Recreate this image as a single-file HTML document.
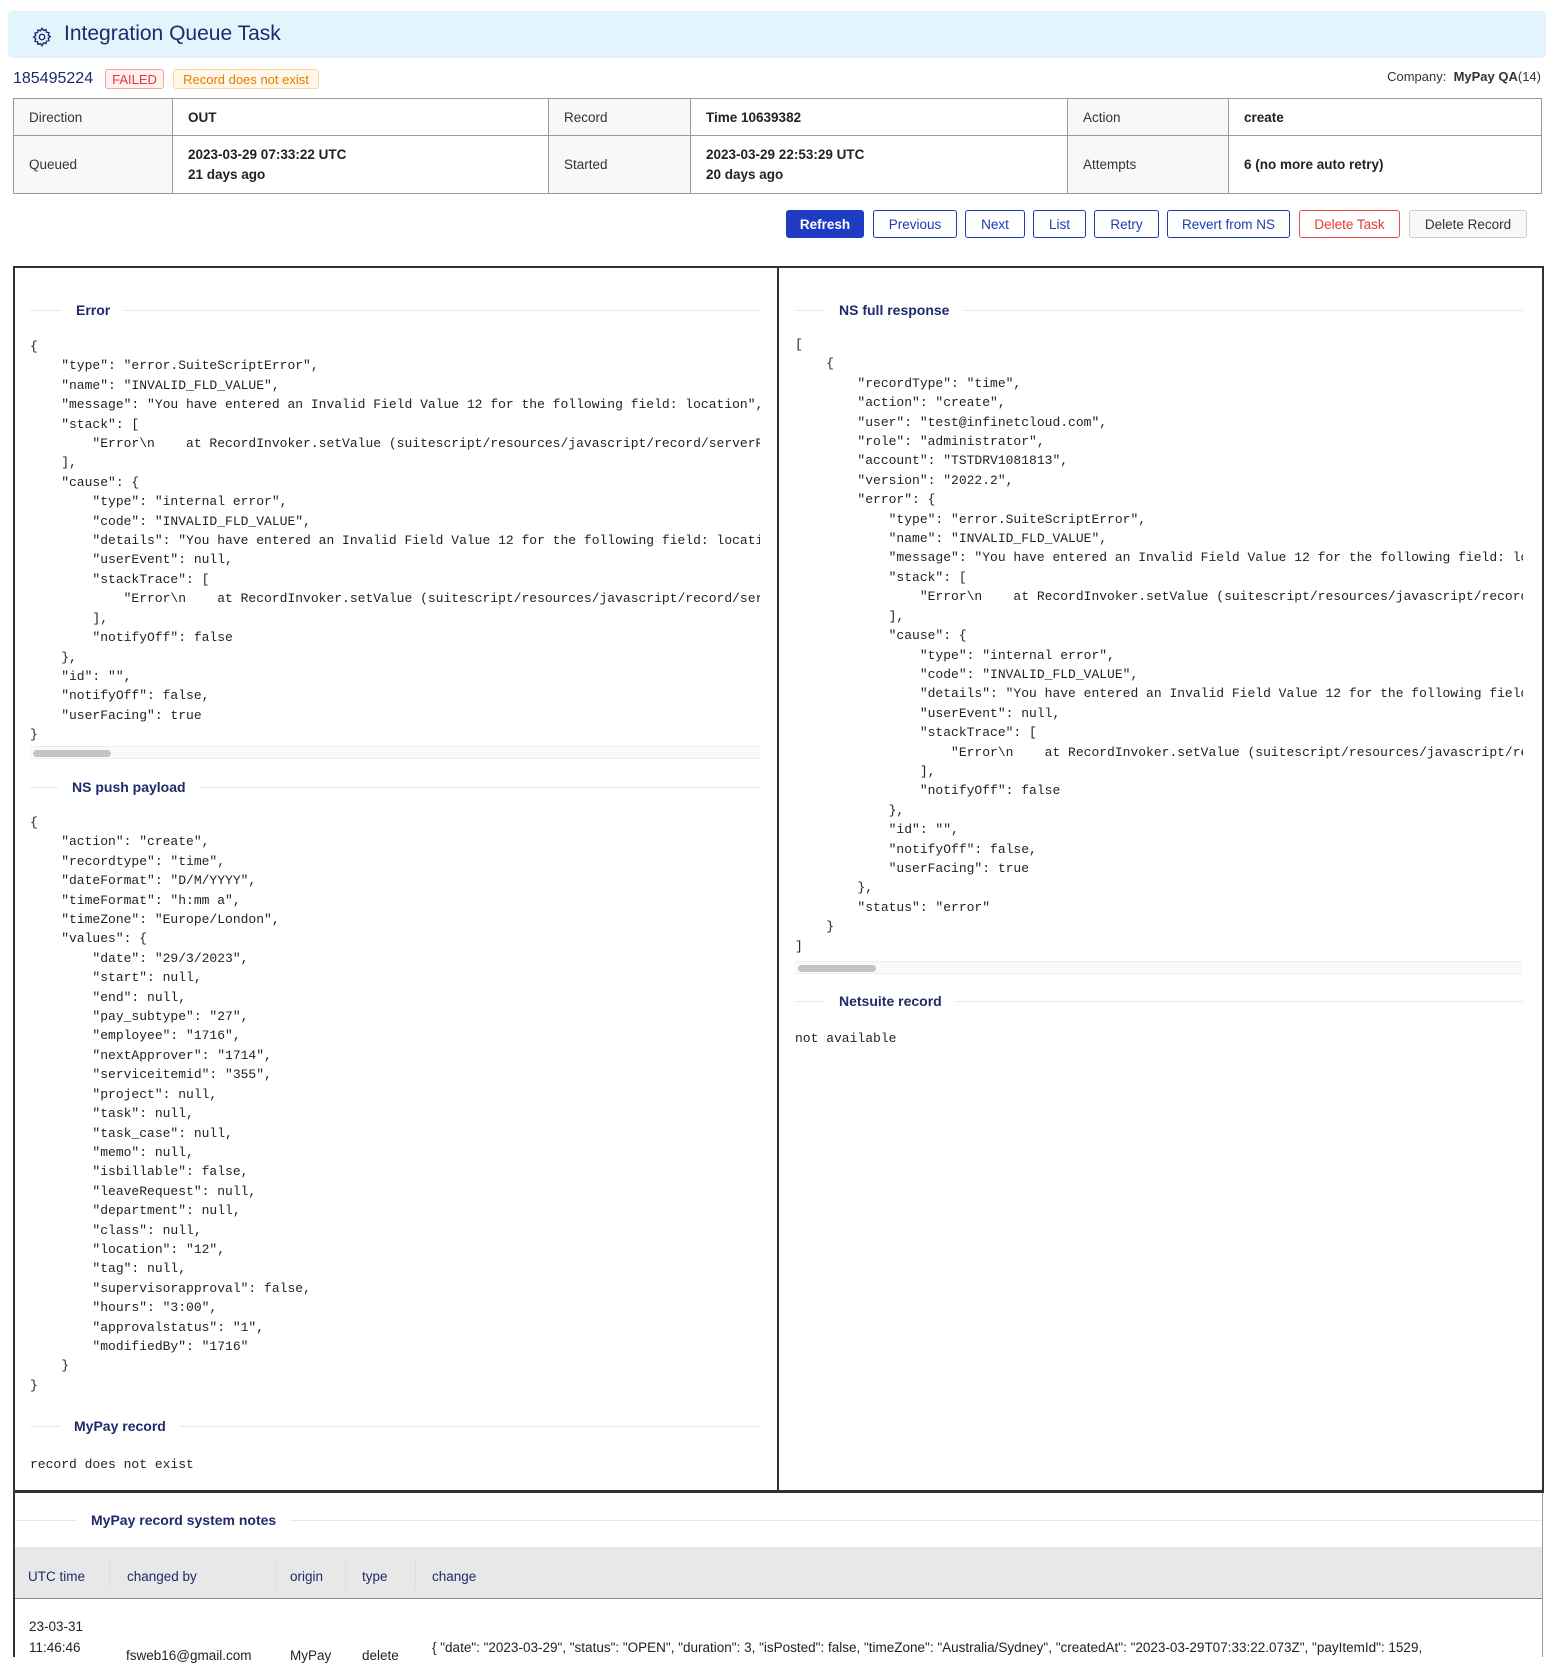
<!DOCTYPE html>
<html><head><meta charset="utf-8"><style>
*{box-sizing:border-box;margin:0;padding:0}
body{width:1550px;height:1657px;overflow:hidden;background:#fff;font-family:"Liberation Sans",sans-serif;color:#222;position:relative}
.abs{position:absolute}
.hdr{left:8px;top:11px;width:1538px;height:47px;background:#e3f5fc;border-radius:4px}
.title{left:64px;top:22px;font-size:21px;color:#1f2a6b;font-weight:500}
.tbl{left:13px;top:98px;width:1529px;height:95px;border:1px solid #999;border-collapse:collapse}
.tbl td{border:1px solid #999;font-size:13.5px;padding:0 15px;color:#222}
.tbl td.l{background:#f8f8f8;color:#333}
.tbl td.v{font-weight:bold;color:#222}
.btn{position:absolute;top:210px;height:28px;border:1px solid #1e3bb3;border-radius:3px;color:#1e3bb3;font-size:13.5px;display:flex;align-items:center;justify-content:center;background:#fff}
.panel{position:absolute;top:266px;height:1226px;border:2px solid #333}
.sec{position:absolute;height:20px;display:flex;align-items:center;font-size:14px;color:#1f2a6b;font-weight:bold}
.sec .a{width:32px;border-top:1px solid #e8e8e8;margin-right:14px}
.sec .b{flex:1;border-top:1px solid #e8e8e8;margin-left:14px}
pre{position:absolute;font-family:"Liberation Mono","DejaVu Sans Mono",monospace;font-size:13px;line-height:19.4px;overflow:hidden;white-space:pre;color:#222}
.track{position:absolute;height:13px;background:#fafafa;border-top:1px solid #eee;border-bottom:1px solid #eee}
.thumb{position:absolute;top:3px;left:3px;width:78px;height:7px;border-radius:4px;background:#c4c4c4}
.th{position:absolute;top:1569px;font-size:13.5px;color:#1f2a6b}
.sep{position:absolute;top:1559px;height:30px;border-left:1px solid #ddd}
.td{position:absolute;font-size:13.5px;color:#222}
</style></head><body>
<div class="abs hdr"></div>
<svg class="abs" style="left:31px;top:26px" width="22" height="22" viewBox="0 0 24 24" fill="none" stroke="#1f2a6b" stroke-width="1.5"><path d="M12 2.5l1.6 2.3 2.7-.8.6 2.7 2.7.6-.8 2.7 2.3 1.6-2.3 1.6.8 2.7-2.7.6-.6 2.7-2.7-.8L12 21.5l-1.6-2.3-2.7.8-.6-2.7-2.7-.6.8-2.7L2.9 12l2.3-1.6-.8-2.7 2.7-.6.6-2.7 2.7.8z"/><circle cx="12" cy="12" r="3"/></svg>
<div class="abs title">Integration Queue Task</div>
<div class="abs" style="left:13px;top:70px;font-size:16px;color:#1f2a6b">185495224</div>
<div class="abs" style="left:105px;top:69px;width:59px;height:20px;border:1px solid #f5a3a3;background:#fff1f0;color:#e53935;font-size:13px;border-radius:3px;display:flex;align-items:center;justify-content:center">FAILED</div>
<div class="abs" style="left:173px;top:69px;width:146px;height:20px;border:1px solid #fcd59a;background:#fff8ea;color:#e67a00;font-size:13px;border-radius:3px;display:flex;align-items:center;justify-content:center">Record does not exist</div>
<div class="abs" style="right:9px;top:69px;font-size:13px;color:#333">Company:&nbsp; <b>MyPay QA</b>(14)</div>
<table class="abs tbl">
<colgroup><col style="width:159px"><col style="width:376px"><col style="width:142px"><col style="width:377px"><col style="width:161px"><col></colgroup>
<tr style="height:37px"><td class="l">Direction</td><td class="v">OUT</td><td class="l">Record</td><td class="v">Time 10639382</td><td class="l">Action</td><td class="v">create</td></tr>
<tr style="height:58px"><td class="l">Queued</td><td class="v" style="line-height:20px">2023-03-29 07:33:22 UTC<br>21 days ago</td><td class="l">Started</td><td class="v" style="line-height:20px">2023-03-29 22:53:29 UTC<br>20 days ago</td><td class="l">Attempts</td><td class="v">6 (no more auto retry)</td></tr>
</table>
<div class="btn" style="left:786px;width:78px;background:#1e3bc4;color:#fff;border-color:#1e3bc4;font-weight:bold">Refresh</div>
<div class="btn" style="left:873px;width:84px">Previous</div>
<div class="btn" style="left:965px;width:60px">Next</div>
<div class="btn" style="left:1033px;width:53px">List</div>
<div class="btn" style="left:1094px;width:65px">Retry</div>
<div class="btn" style="left:1167px;width:123px">Revert from NS</div>
<div class="btn" style="left:1299px;width:101px;border-color:#f04848;color:#e53935">Delete Task</div>
<div class="btn" style="left:1409px;width:118px;border-color:#ccc;color:#333;background:#f8f8f8">Delete Record</div>

<div class="panel" style="left:13px;width:766px"></div>
<div class="panel" style="left:777px;width:767px"></div>

<div class="sec" style="left:30px;top:300px;width:730px"><span class="a"></span>Error<span class="b"></span></div>
<pre style="left:30px;top:337px;width:730px;height:410px">{
    "type": "error.SuiteScriptError",
    "name": "INVALID_FLD_VALUE",
    "message": "You have entered an Invalid Field Value 12 for the following field: location",
    "stack": [
        "Error\n    at RecordInvoker.setValue (suitescript/resources/javascript/record/serverRecordService.js)"
    ],
    "cause": {
        "type": "internal error",
        "code": "INVALID_FLD_VALUE",
        "details": "You have entered an Invalid Field Value 12 for the following field: location",
        "userEvent": null,
        "stackTrace": [
            "Error\n    at RecordInvoker.setValue (suitescript/resources/javascript/record/serverRecordService.js)"
        ],
        "notifyOff": false
    },
    "id": "",
    "notifyOff": false,
    "userFacing": true
}</pre>
<div class="track" style="left:30px;top:746px;width:730px"><div class="thumb"></div></div>
<div class="sec" style="left:30px;top:777px;width:730px"><span class="a" style="width:28px"></span>NS push payload<span class="b"></span></div>
<pre style="left:30px;top:813px;width:730px;height:590px">{
    "action": "create",
    "recordtype": "time",
    "dateFormat": "D/M/YYYY",
    "timeFormat": "h:mm a",
    "timeZone": "Europe/London",
    "values": {
        "date": "29/3/2023",
        "start": null,
        "end": null,
        "pay_subtype": "27",
        "employee": "1716",
        "nextApprover": "1714",
        "serviceitemid": "355",
        "project": null,
        "task": null,
        "task_case": null,
        "memo": null,
        "isbillable": false,
        "leaveRequest": null,
        "department": null,
        "class": null,
        "location": "12",
        "tag": null,
        "supervisorapproval": false,
        "hours": "3:00",
        "approvalstatus": "1",
        "modifiedBy": "1716"
    }
}</pre>
<div class="sec" style="left:30px;top:1416px;width:730px"><span class="a" style="width:30px"></span>MyPay record<span class="b"></span></div>
<pre style="left:30px;top:1455px;width:730px;height:20px">record does not exist</pre>

<div class="sec" style="left:795px;top:300px;width:728px"><span class="a" style="width:30px"></span>NS full response<span class="b"></span></div>
<pre style="left:795px;top:335px;width:728px;height:625px">[
    {
        "recordType": "time",
        "action": "create",
        "user": "test@infinetcloud.com",
        "role": "administrator",
        "account": "TSTDRV1081813",
        "version": "2022.2",
        "error": {
            "type": "error.SuiteScriptError",
            "name": "INVALID_FLD_VALUE",
            "message": "You have entered an Invalid Field Value 12 for the following field: location",
            "stack": [
                "Error\n    at RecordInvoker.setValue (suitescript/resources/javascript/record/serverRecordService.js)"
            ],
            "cause": {
                "type": "internal error",
                "code": "INVALID_FLD_VALUE",
                "details": "You have entered an Invalid Field Value 12 for the following field: location",
                "userEvent": null,
                "stackTrace": [
                    "Error\n    at RecordInvoker.setValue (suitescript/resources/javascript/record/serverRecordService.js)"
                ],
                "notifyOff": false
            },
            "id": "",
            "notifyOff": false,
            "userFacing": true
        },
        "status": "error"
    }
]</pre>
<div class="track" style="left:795px;top:961px;width:728px"><div class="thumb"></div></div>
<div class="sec" style="left:795px;top:991px;width:728px"><span class="a" style="width:30px"></span>Netsuite record<span class="b"></span></div>
<pre style="left:795px;top:1029px;width:728px;height:20px">not available</pre>

<div class="abs" style="left:13px;top:1490px;width:1531px;height:3px;background:#333"></div>
<div class="abs" style="left:13px;top:1493px;width:2px;height:164px;background:#333"></div>
<div class="abs" style="left:1542px;top:1493px;width:1px;height:164px;background:#999"></div>
<div class="sec" style="left:15px;top:1510px;width:1527px"><span class="a" style="width:62px"></span>MyPay record system notes<span class="b"></span></div>
<div class="abs" style="left:15px;top:1547px;width:1527px;height:52px;background:#e8e8e8;border-bottom:1px solid #888"></div>
<div class="th" style="left:28px">UTC time</div>
<div class="sep" style="left:109px"></div>
<div class="th" style="left:127px">changed by</div>
<div class="sep" style="left:275px"></div>
<div class="th" style="left:290px">origin</div>
<div class="sep" style="left:345px"></div>
<div class="th" style="left:362px">type</div>
<div class="sep" style="left:415px"></div>
<div class="th" style="left:432px">change</div>
<div class="td" style="left:29px;top:1619px">23-03-31</div>
<div class="td" style="left:29px;top:1640px">11:46:46</div>
<div class="td" style="left:126px;top:1648px">fsweb16@gmail.com</div>
<div class="td" style="left:290px;top:1648px">MyPay</div>
<div class="td" style="left:362px;top:1648px">delete</div>
<div class="td" style="left:432px;top:1640px;white-space:nowrap">{ "date": "2023-03-29", "status": "OPEN", "duration": 3, "isPosted": false, "timeZone": "Australia/Sydney", "createdAt": "2023-03-29T07:33:22.073Z", "payItemId": 1529,</div>
</body></html>
